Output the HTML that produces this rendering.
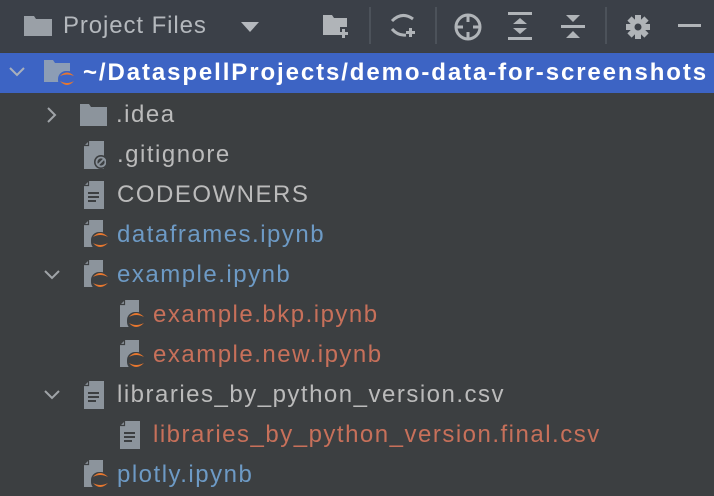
<!DOCTYPE html>
<html><head><meta charset="utf-8"><style>
*{margin:0;padding:0;box-sizing:border-box}
body{width:714px;height:496px;background:#3c3f41;overflow:hidden;font-family:"Liberation Sans",sans-serif;position:relative}
.hdr{position:absolute;left:0;top:0;width:714px;height:52px;background:#3b4048}
.sel{position:absolute;left:0;top:53px;width:714px;height:40px;background:#3d64c4}
.t{position:absolute;font-size:24px;letter-spacing:1.5px;line-height:40px;white-space:nowrap;color:#bbbbbb}
.b{color:#6d9ac5}.r{color:#c7705a}
svg{position:absolute}
</style></head><body>
<svg width="0" height="0" style="position:absolute">
<defs>
<symbol id="doc" viewBox="0 0 22 28"><path d="M5 0H20V28H0V5Z" fill="#8c949c"/><path d="M4.5 0V4.5H0" stroke="#3c3f41" stroke-width="1.2" fill="none"/><rect x="4" y="11" width="11" height="2" fill="#3c3f41"/><rect x="4" y="15" width="11" height="2" fill="#3c3f41"/><rect x="4" y="19" width="8" height="2" fill="#3c3f41"/></symbol>
<symbol id="jup" viewBox="0 0 25 30"><path d="M5 0H19V27H0V5Z" fill="#8c949c"/><path d="M4.5 0V4.5H0" stroke="#3c3f41" stroke-width="1.2" fill="none"/><rect x="7" y="12" width="18" height="18" rx="8" fill="#3c3f41"/><path d="M9 17Q16 9 24 17Q16 13 9 17Z" fill="#e8772e"/><path d="M9 23Q16 31 24 23Q16 27 9 23Z" fill="#e8772e"/></symbol>
</defs></svg>

<div class="hdr"></div>
<svg style="left:24px;top:16px" width="28" height="20" viewBox="0 0 28 20"><path d="M0 0H10L12 3H28V20H0Z" fill="#9aa0a7"/></svg>
<div class="t" style="left:63px;top:6px;color:#b4b8bd;font-size:24px;letter-spacing:0.9px">Project Files</div>
<svg style="left:241px;top:22px" width="18" height="10" viewBox="0 0 18 10"><path d="M0 0H18L9 10Z" fill="#b4b8bd"/></svg>
<svg style="left:323px;top:15px" width="30" height="24" viewBox="0 0 30 24"><path d="M0 0H9L11 3H24V12H17V20H0Z" fill="#b0b4b8"/><path d="M19 14H22V17H25V20H22V23H19V20H16V17H19Z" fill="#b0b4b8"/></svg>
<div style="position:absolute;left:369px;top:7px;width:2px;height:37px;background:#4c525a"></div>
<svg style="left:388px;top:11px" width="32" height="30" viewBox="0 0 32 30"><path d="M4 10Q14 0 25 8" stroke="#b0b4b8" stroke-width="3" fill="none"/><path d="M4 18Q10 25 18 24" stroke="#b0b4b8" stroke-width="3" fill="none"/><path d="M21 17H24V20H27V23H24V26H21V23H18V20H21Z" fill="#b0b4b8"/></svg>
<div style="position:absolute;left:435px;top:7px;width:2px;height:37px;background:#4c525a"></div>
<svg style="left:453px;top:12px" width="30" height="30" viewBox="0 0 30 30"><circle cx="15" cy="15" r="12" stroke="#b0b4b8" stroke-width="3" fill="none"/><path d="M15 3V10M15 20V27M3 15H10M20 15H27" stroke="#b0b4b8" stroke-width="3"/></svg>
<svg style="left:507px;top:12px" width="26" height="28" viewBox="0 0 26 28"><rect x="1" y="0" width="24" height="3" fill="#b0b4b8"/><rect x="1" y="25" width="24" height="3" fill="#b0b4b8"/><path d="M6 12L13 6L20 12Z M6 16L13 22L20 16Z" fill="#b0b4b8"/></svg>
<svg style="left:560px;top:13px" width="26" height="28" viewBox="0 0 26 28"><rect x="1" y="12" width="24" height="3" fill="#b0b4b8"/><path d="M6 2L13 9L20 2Z M6 25L13 18L20 25Z" fill="#b0b4b8"/></svg>
<div style="position:absolute;left:605px;top:7px;width:2px;height:37px;background:#4c525a"></div>
<svg style="left:625px;top:14px" width="26" height="26" viewBox="0 0 26 26"><g fill="#b0b4b8"><circle cx="13" cy="13" r="8"/><rect x="10" y="1" width="6" height="24"/><rect x="1" y="10" width="24" height="6"/><rect x="10" y="1" width="6" height="24" transform="rotate(45 13 13)"/><rect x="10" y="1" width="6" height="24" transform="rotate(-45 13 13)"/></g><circle cx="13" cy="13" r="3.5" fill="#3b4048"/></svg>
<div style="position:absolute;left:678px;top:24px;width:23px;height:3px;background:#b0b4b8"></div>

<div class="sel"></div>
<svg style="left:9px;top:67px" width="16" height="10" viewBox="0 0 16 10"><path d="M1 1L8 8L15 1" stroke="#a9b0bc" stroke-width="2" fill="none"/></svg>
<svg style="left:44px;top:60px" width="32" height="28" viewBox="0 0 32 28"><path d="M0 0H9L11 3H26V22H0Z" fill="#8c9db5"/><rect x="14" y="11" width="18" height="17" rx="8" fill="#3d64c4"/><path d="M16 16Q23 9 30 16Q23 13 16 16Z" fill="#e8772e"/><path d="M16 21Q23 29 30 21Q23 25 16 21Z" fill="#e8772e"/></svg>
<div class="t" style="left:83px;top:53px;color:#fff;font-weight:bold;font-size:24px;letter-spacing:1.9px">~/DataspellProjects/demo-data-for-screenshots</div>

<svg style="left:47px;top:107px" width="10" height="16" viewBox="0 0 10 16"><path d="M1 1L8 8L1 15" stroke="#a0a4a8" stroke-width="2" fill="none"/></svg>
<svg style="left:80px;top:104px" width="28" height="22" viewBox="0 0 28 22"><path d="M0 0H9L11 3H27V22H0Z" fill="#8c949c"/></svg>
<div class="t" style="left:116px;top:95px">.idea</div>

<svg style="left:84px;top:141px" width="22" height="28" viewBox="0 0 22 28"><path d="M5 0H20V28H0V5Z" fill="#8c949c"/><path d="M4.5 0V4.5H0" stroke="#3c3f41" stroke-width="1.2" fill="none"/><circle cx="17" cy="21" r="7" fill="#3c3f41"/><circle cx="17" cy="21" r="4.5" stroke="#8c949c" stroke-width="1.8" fill="none"/><path d="M14 24L20 18" stroke="#8c949c" stroke-width="1.8"/></svg>
<div class="t" style="left:117px;top:135px">.gitignore</div>

<svg style="left:84px;top:181px" width="22" height="28"><use href="#doc"/></svg>
<div class="t" style="left:117px;top:175px">CODEOWNERS</div>

<svg style="left:84px;top:220px" width="25" height="30"><use href="#jup"/></svg>
<div class="t b" style="left:117px;top:215px">dataframes.ipynb</div>

<svg style="left:44px;top:270px" width="16" height="10" viewBox="0 0 16 10"><path d="M1 1L8 8L15 1" stroke="#a0a4a8" stroke-width="2" fill="none"/></svg>
<svg style="left:84px;top:260px" width="25" height="30"><use href="#jup"/></svg>
<div class="t b" style="left:117px;top:255px">example.ipynb</div>

<svg style="left:120px;top:300px" width="25" height="30"><use href="#jup"/></svg>
<div class="t r" style="left:153px;top:295px">example.bkp.ipynb</div>

<svg style="left:120px;top:340px" width="25" height="30"><use href="#jup"/></svg>
<div class="t r" style="left:153px;top:335px">example.new.ipynb</div>

<svg style="left:44px;top:390px" width="16" height="10" viewBox="0 0 16 10"><path d="M1 1L8 8L15 1" stroke="#a0a4a8" stroke-width="2" fill="none"/></svg>
<svg style="left:84px;top:381px" width="22" height="28"><use href="#doc"/></svg>
<div class="t" style="left:117px;top:375px">libraries_by_python_version.csv</div>

<svg style="left:120px;top:421px" width="22" height="28"><use href="#doc"/></svg>
<div class="t r" style="left:153px;top:415px">libraries_by_python_version.final.csv</div>

<svg style="left:84px;top:460px" width="25" height="30"><use href="#jup"/></svg>
<div class="t b" style="left:117px;top:455px">plotly.ipynb</div>
</body></html>
